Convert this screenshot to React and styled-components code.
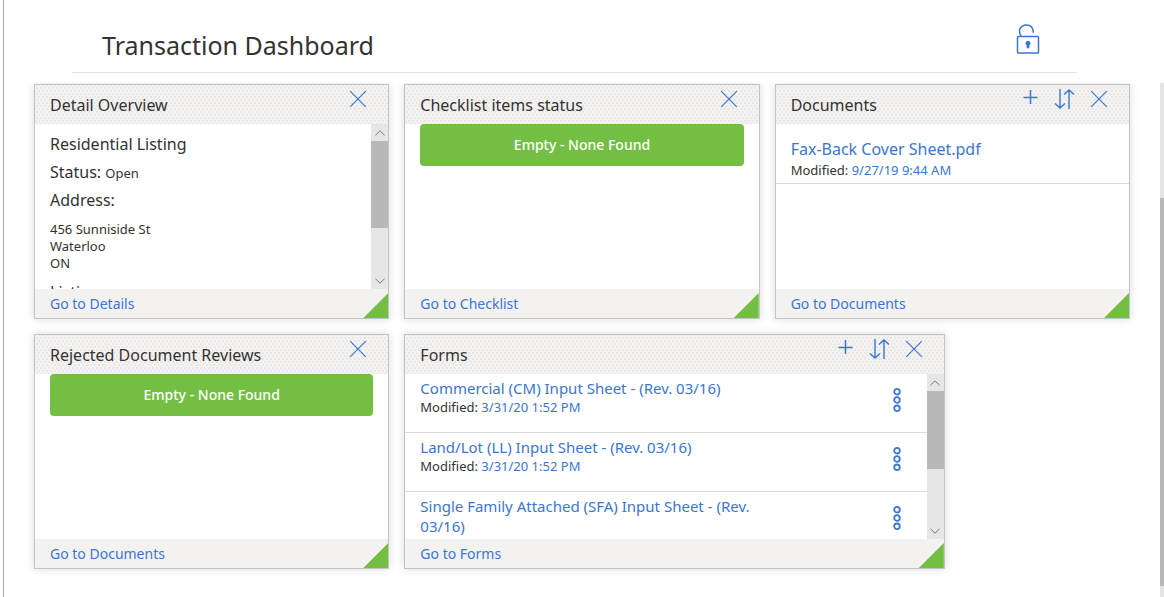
import React from 'react'
import styled, { createGlobalStyle } from 'styled-components'

const GlobalStyle = createGlobalStyle`
  * {
    box-sizing: border-box;
  }
  body {
    margin: 0;
    background: #fff;
    color: #333;
    font-family: 'Noto Sans', 'Open Sans', sans-serif;
    font-size: 14px;
  }
  h1, h2, p {
    margin: 0;
    font-weight: 400;
  }
`

const FORMS = [
  { id: 1, name: 'Commercial (CM) Input Sheet - (Rev. 03/16)', modified: '3/31/20 1:52 PM' },
  { id: 2, name: 'Land/Lot (LL) Input Sheet - (Rev. 03/16)', modified: '3/31/20 1:52 PM' },
  { id: 3, name: 'Single Family Attached (SFA) Input Sheet - (Rev. 03/16)' },
]

const CloseIcon = () => (
  <svg width='18' height='18' viewBox='0 0 18 18' fill='none' stroke='currentColor' strokeWidth='1.2'>
    <path d='M1.2 1.2l15.6 15.6M16.8 1.2L1.2 16.8' />
  </svg>
)

const PlusIcon = () => (
  <svg width='16' height='16' viewBox='0 0 16 16' fill='none' stroke='currentColor' strokeWidth='1.5'>
    <path d='M8.5 1v14M1.5 8.5h14' />
  </svg>
)

const SortIcon = () => (
  <svg width='20' height='20' viewBox='0 0 20 20' fill='none' stroke='currentColor' strokeWidth='1.4'>
    <path d='M6 0v18.8M1 14.5l5 4.5 5-4.5' />
    <path d='M15 20V1.2M10 5.5l5-4.5 5 4.5' />
  </svg>
)

const MoreIcon = () => (
  <svg width='8' height='24' viewBox='0 0 8 24' fill='none' stroke='currentColor' strokeWidth='1.8'>
    <circle cx='4' cy='3.7' r='2.8' />
    <circle cx='4' cy='12' r='2.8' />
    <circle cx='4' cy='20.3' r='2.8' />
  </svg>
)

const UnlockIcon = () => (
  <svg width='24' height='30' viewBox='0 0 24 30' fill='none' stroke='currentColor' strokeWidth='1.5'>
    <rect x='1.5' y='12.5' width='21' height='16.5' rx='0.8' />
    <path d='M5 12C3 8.5 3.2 5.5 4.8 3.6C7 0.8 11 0.2 13.8 1.7C16.2 3 17.3 5.5 17.3 8.7' />
    <path
      d='M12 16.8a2.5 2.5 0 0 1 1.5 4.5l-.3 3h-2.4l-.3-3a2.5 2.5 0 0 1 1.5-4.5z'
      fill='currentColor'
      stroke='none'
    />
  </svg>
)

const Chevron = ({ up }) => (
  <svg width='10' height='6' viewBox='0 0 10 6' fill='none' stroke='#777' strokeWidth='1'>
    <path d={up ? 'M0.5 5.2L5 0.8l4.5 4.4' : 'M0.5 0.8L5 5.2 9.5 0.8'} />
  </svg>
)

const ScrollBar = ({ thumb }) => (
  <Track aria-hidden='true'>
    <TrackEnd>
      <Chevron up />
    </TrackEnd>
    <Thumb $height={thumb} />
    <TrackEnd $last>
      <Chevron />
    </TrackEnd>
  </Track>
)

const Card = ({ title, linkText, span = 4, tools = false, thumb, children }) => (
  <CardBox $span={span}>
    <CardHeader>
      <CardTitle>{title}</CardTitle>
      <Tools>
        {tools && (
          <>
            <IconButton aria-label={`Add to ${title}`} $raised>
              <PlusIcon />
            </IconButton>
            <IconButton aria-label={`Sort ${title}`}>
              <SortIcon />
            </IconButton>
          </>
        )}
        <IconButton aria-label={`Close ${title}`}>
          <CloseIcon />
        </IconButton>
      </Tools>
    </CardHeader>
    <CardBody>
      <CardContent>{children}</CardContent>
      {thumb && <ScrollBar thumb={thumb} />}
    </CardBody>
    <CardFooter>
      <FooterLink href='#'>{linkText}</FooterLink>
      <Corner />
    </CardFooter>
  </CardBox>
)

const App = () => {
  return (
    <Page>
      <GlobalStyle />
      <PageHeader>
        <PageTitle>Transaction Dashboard</PageTitle>
        <IconButton aria-label='Unlock transaction'>
          <UnlockIcon />
        </IconButton>
      </PageHeader>
      <Main>
        <Grid>
          <Card title='Detail Overview' linkText='Go to Details' thumb={87}>
            <Details>
              <Heading>Residential Listing</Heading>
              <Heading>
                Status: <Small>Open</Small>
              </Heading>
              <Heading>Address:</Heading>
              <Address>
                456 Sunniside St
                <br />
                Waterloo
                <br />
                ON
              </Address>
              <Heading>Listing</Heading>
            </Details>
          </Card>
          <Card title='Checklist items status' linkText='Go to Checklist'>
            <EmptyNotice>Empty - None Found</EmptyNotice>
          </Card>
          <Card title='Documents' linkText='Go to Documents' tools>
            <DocumentRow>
              <DocumentLink href='#'>Fax-Back Cover Sheet.pdf</DocumentLink>
              <Modified>
                Modified: <span>9/27/19 9:44 AM</span>
              </Modified>
            </DocumentRow>
          </Card>
          <Card title='Rejected Document Reviews' linkText='Go to Documents'>
            <EmptyNotice>Empty - None Found</EmptyNotice>
          </Card>
          <Card title='Forms' linkText='Go to Forms' span={6} tools thumb={78}>
            {FORMS.map((form) => (
              <FormRow key={form.id}>
                <FormText>
                  <FormLink href='#'>{form.name}</FormLink>
                  {form.modified && (
                    <Modified>
                      Modified: <span>{form.modified}</span>
                    </Modified>
                  )}
                </FormText>
                <IconButton aria-label={`Options for ${form.name}`}>
                  <MoreIcon />
                </IconButton>
              </FormRow>
            ))}
          </Card>
        </Grid>
        <PageTrack aria-hidden='true'>
          <PageThumb />
        </PageTrack>
      </Main>
    </Page>
  )
}

export default App

const Page = styled.div`
  display: flex;
  flex-direction: column;
  height: 100vh;
  margin-left: 3px;
  border-left: 1px solid #9ab0d4;
  overflow: hidden;
`

const PageHeader = styled.header`
  display: flex;
  align-items: flex-start;
  justify-content: space-between;
  height: 73px;
  margin: 0 87px 10px 68px;
  padding: 24px 37px 0 30px;
  border-bottom: 1px solid #e4e4e4;
`

const PageTitle = styled.h1`
  font-size: 25px;
  line-height: 42px;
`

const IconButton = styled.button`
  display: flex;
  flex-shrink: 0;
  padding: 0;
  padding-bottom: ${({ $raised }) => ($raised ? '4px' : '0')};
  border: none;
  background: none;
  color: #3b76d0;
  cursor: pointer;
`

const Main = styled.main`
  display: flex;
  flex: 1;
  min-height: 0;
`

const Grid = styled.div`
  display: grid;
  flex: 1;
  grid-template-columns: repeat(12, minmax(0, 1fr));
  align-content: start;
  gap: 15px;
  padding: 1px 30px 15px;
  overflow: hidden;
`

const PageTrack = styled.div`
  width: 4px;
  padding: 115px 0 11px;
  background: #e4e4e4;
`

const PageThumb = styled.div`
  height: 100%;
  background: #b8b8b8;
`

const CardBox = styled.section`
  grid-column: span ${({ $span }) => $span};
  border: 1px solid #c4c4c4;
  background: #fff;
  box-shadow: 0 0 8px rgba(0, 0, 0, 0.15);
`

const CardHeader = styled.header`
  display: flex;
  justify-content: space-between;
  height: 39px;
  padding: 0 21px 0 15px;
  background-color: #f5f3f2;
  background-image: radial-gradient(circle, #e9e7e6 1px, transparent 1px),
    radial-gradient(circle, #e9e7e6 1px, transparent 1px);
  background-position: 0 0, 2px 3px;
  background-size: 4px 6px;
`

const CardTitle = styled.h2`
  padding-top: 8px;
  font-size: 16px;
  line-height: 24px;
`

const Tools = styled.div`
  display: flex;
  align-items: center;
  gap: 16px;
  height: 28px;
`

const CardBody = styled.div`
  display: flex;
  height: 165px;
  overflow: hidden;
`

const CardContent = styled.div`
  flex: 1;
  min-width: 0;
`

const CardFooter = styled.footer`
  display: flex;
  align-items: flex-end;
  justify-content: space-between;
  height: 29px;
  padding-left: 15px;
  background: #f4f2f1;
`

const Link = styled.a`
  color: #3b76d0;
  text-decoration: none;
`

const FooterLink = styled(Link)`
  font-size: 14px;
  line-height: 28px;
`

const DocumentLink = styled(Link)`
  font-size: 16px;
  line-height: 24px;
`

const FormLink = styled(Link)`
  display: block;
  font-size: 15px;
  line-height: 20px;
`

const Corner = styled.span`
  width: 25px;
  height: 25px;
  background: #72bf44;
  clip-path: polygon(100% 0, 100% 100%, 0 100%);
`

const Details = styled.div`
  padding: 8px 15px 0;
`

const Heading = styled.p`
  margin-bottom: 4px;
  font-size: 16px;
  line-height: 24px;
`

const Small = styled.span`
  font-size: 13px;
  line-height: 16px;
`

const Address = styled.p`
  margin: 9px 0 8px;
  font-size: 13px;
  line-height: 17px;
`

const EmptyNotice = styled.p`
  margin: 0 15px;
  border-radius: 4px;
  background: #72bf44;
  color: #fff;
  font-size: 14px;
  font-weight: 500;
  line-height: 42px;
  text-align: center;
`

const DocumentRow = styled.div`
  padding: 13px 15px 4px;
  border-bottom: 1px solid #dcdcdc;
`

const Modified = styled.p`
  font-size: 13px;
  line-height: 18px;

  span {
    color: #3b76d0;
  }
`

const FormRow = styled.div`
  display: flex;
  align-items: flex-start;
  justify-content: space-between;
  min-height: 59px;
  padding: 4px 26px 0 15px;
  border-bottom: 1px solid #dcdcdc;

  ${IconButton} {
    margin-top: 10px;
  }
`

const FormText = styled.div`
  width: 360px;
`

const Track = styled.div`
  display: flex;
  flex-direction: column;
  width: 17px;
  background: #e6e6e6;
`

const TrackEnd = styled.div`
  display: flex;
  align-items: center;
  justify-content: center;
  height: 17px;
  margin-top: ${({ $last }) => ($last ? 'auto' : '0')};
`

const Thumb = styled.div`
  height: ${({ $height }) => $height}px;
  background: #b8b8b8;
`
